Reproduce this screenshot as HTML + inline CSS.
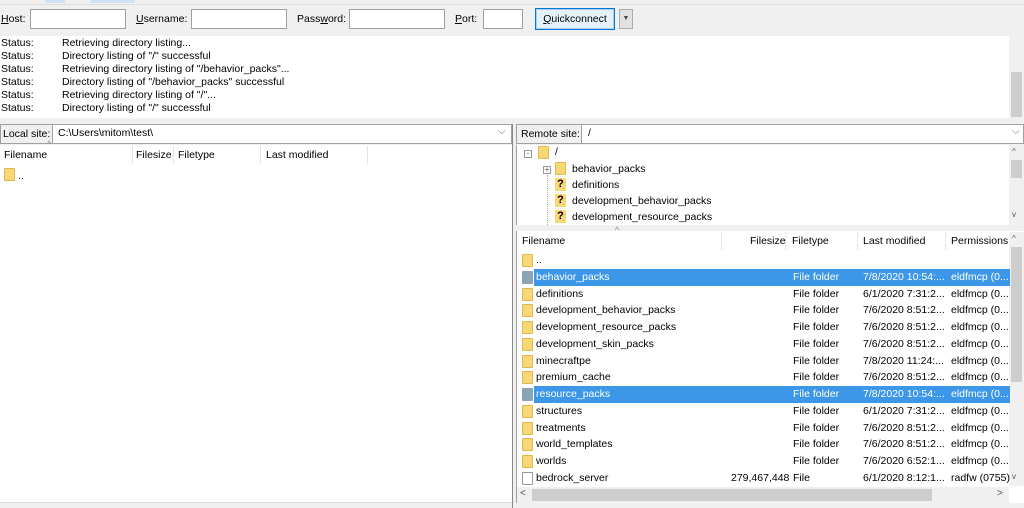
<!DOCTYPE html>
<html><head><meta charset="utf-8"><style>
*{margin:0;padding:0;box-sizing:border-box}
body{width:1024px;height:508px;overflow:hidden;background:#f0f0f0;font-family:"Liberation Sans",sans-serif;font-size:10.5px;color:#000;position:relative;white-space:nowrap}
.a{position:absolute}
.in{position:absolute;background:#fff;border:1px solid #a0a0a0;height:20px}
.lbl{position:absolute;top:13px}
.log div{height:13px;line-height:13px;white-space:nowrap}
.fold{position:absolute;width:11px;height:13px;background:#f8d876;border:1px solid #e0b850;border-radius:1px}
.row{position:absolute;left:518px;width:492px;height:16.75px;line-height:17.5px;white-space:nowrap;overflow:hidden}
.row span{position:absolute}
.sel{background:#3c97e8;color:#fff}
.q{position:absolute;width:11px;height:13px;background:#f8d876;font-weight:bold;font-size:11px;line-height:13px;text-align:center}
.hd{position:absolute;height:18px;line-height:19px;background:#fff;overflow:hidden}
.dv{position:absolute;top:0;width:1px;height:18px;background:#e5e5e5}
</style></head><body>
<div class="a" style="left:45px;top:0;width:20px;height:3px;background:#cfe3f5"></div>
<div class="a" style="left:90px;top:0;width:45px;height:3px;background:#cfe3f5"></div>
<div class="a" style="left:0;top:4px;width:1024px;height:1px;background:#ddd"></div>

<span class="lbl" style="left:1px"><u>H</u>ost:</span>
<div class="in" style="left:30px;top:9px;width:96px"></div>
<span class="lbl" style="left:136px"><u>U</u>sername:</span>
<div class="in" style="left:191px;top:9px;width:96px"></div>
<span class="lbl" style="left:297px">Pass<u>w</u>ord:</span>
<div class="in" style="left:349px;top:9px;width:96px"></div>
<span class="lbl" style="left:455px"><u>P</u>ort:</span>
<div class="in" style="left:483px;top:9px;width:40px"></div>
<div class="a" style="left:535px;top:8px;width:80px;height:22px;background:#e5f1fb;border:1px solid #0078d7;box-shadow:inset 0 0 0 1px #a8cdef;text-align:center;line-height:20px"><u>Q</u>uickconnect</div>
<div class="a" style="left:619px;top:9px;width:14px;height:20px;background:#e1e1e1;border:1px solid #adadad;font-size:7px;text-align:center;line-height:18px;color:#444">▼</div>

<div class="a log" style="left:0;top:36px;width:1024px;height:82px;background:#fff">
<div style="position:absolute;left:1px;top:1px;height:auto">Status:<br>Status:<br>Status:<br>Status:<br>Status:<br>Status:</div>
<div style="position:absolute;left:62px;top:1px;height:auto">Retrieving directory listing...<br>Directory listing of "/" successful<br>Retrieving directory listing of "/behavior_packs"...<br>Directory listing of "/behavior_packs" successful<br>Retrieving directory listing of "/"...<br>Directory listing of "/" successful</div>
<div style="position:absolute;left:1009px;top:0;width:15px;height:82px;background:#f0f0f0"></div>
<div style="position:absolute;left:1011px;top:36px;width:11px;height:45px;background:#cdcdcd"></div>
</div>

<!-- local site -->
<div class="a" style="left:0;top:124px;width:512px;height:20px;background:#fff;border:1px solid #a0a0a0"></div>
<div class="a" style="left:0;top:124px;width:53px;height:20px;background:#f0f0f0;border:1px solid #a0a0a0;line-height:18px;padding-left:2px">Local site:</div>
<span class="a" style="left:58px;top:127px">C:\Users\mitom\test\</span>
<span class="a" style="left:498px;top:126px;color:#666;font-size:10px">⌵</span>
<div class="a" style="left:0;top:145px;width:512px;height:358px;background:#fff"></div>
<div class="hd" style="left:0;top:146px;width:512px">
<span class="a" style="left:4px">Filename</span><span class="a" style="left:136px">Filesize</span><span class="a" style="left:178px">Filetype</span><span class="a" style="left:266px">Last modified</span>
<div class="dv" style="left:132px"></div><div class="dv" style="left:173px"></div><div class="dv" style="left:260px"></div><div class="dv" style="left:367px"></div>
</div>
<span class="a" style="left:47px;top:139px;color:#888;font-size:9px">^</span>
<div class="fold" style="left:4px;top:168px"></div><span class="a" style="left:18px;top:170px">..</span>
<div class="a" style="left:0;top:502px;width:512px;height:1px;background:#ddd"></div>

<!-- remote site -->
<div class="a" style="left:516px;top:124px;width:508px;height:20px;background:#fff;border:1px solid #a0a0a0"></div>
<div class="a" style="left:516px;top:124px;width:66px;height:20px;background:#f0f0f0;border:1px solid #a0a0a0;line-height:18px;padding-left:4px">Remote site:</div>
<span class="a" style="left:588px;top:127px">/</span>
<span class="a" style="left:1012px;top:126px;color:#666;font-size:10px">⌵</span>

<div class="a" style="left:516px;top:145px;width:508px;height:80px;background:#fff;border-left:1px solid #a0a0a0"></div>
<div class="a" style="left:1009px;top:145px;width:15px;height:80px;background:#f0f0f0"></div>
<div class="a" style="left:1011px;top:160px;width:11px;height:18px;background:#cdcdcd"></div>
<span class="a" style="left:1012px;top:147px;font-size:8px;color:#555">^</span>
<span class="a" style="left:1012px;top:210px;font-size:8px;color:#555">v</span>
<div class="a" style="left:524px;top:150px;width:8px;height:8px;border:1px solid #999;font-size:8px;line-height:6px;text-align:center;color:#555">-</div>
<div class="fold" style="left:538px;top:146px"></div><span class="a" style="left:555px;top:146px">/</span>
<div class="a" style="left:543px;top:166px;width:8px;height:8px;border:1px solid #999;font-size:8px;line-height:6px;text-align:center;color:#555">+</div>
<div class="fold" style="left:555px;top:162px"></div><span class="a" style="left:572px;top:163px">behavior_packs</span>
<div class="q" style="left:555px;top:178px">?</div><span class="a" style="left:572px;top:179px">definitions</span>
<div class="q" style="left:555px;top:194px">?</div><span class="a" style="left:572px;top:195px">development_behavior_packs</span>
<div class="q" style="left:555px;top:210px">?</div><span class="a" style="left:572px;top:211px">development_resource_packs</span>
<div class="a" style="left:547px;top:175px;width:1px;height:50px;border-left:1px dotted #aaa"></div>

<div class="a" style="left:516px;top:231px;width:508px;height:272px;background:#fff;border-left:1px solid #a0a0a0"></div>
<div class="hd" style="left:517px;top:232px;width:492px">
<span class="a" style="left:5px">Filename</span><span class="a" style="left:233px">Filesize</span><span class="a" style="left:275px">Filetype</span><span class="a" style="left:346px">Last modified</span><span class="a" style="left:434px">Permissions</span>
<div class="dv" style="left:204px"></div><div class="dv" style="left:268px"></div><div class="dv" style="left:340px"></div><div class="dv" style="left:428px"></div>
</div>
<span class="a" style="left:615px;top:225px;color:#888;font-size:9px">^</span>
<div class="a" style="left:1009px;top:232px;width:15px;height:254px;background:#f0f0f0"></div>
<div class="a" style="left:1011px;top:247px;width:11px;height:135px;background:#cdcdcd"></div>
<span class="a" style="left:1012px;top:234px;font-size:8px;color:#555">^</span>
<span class="a" style="left:1012px;top:472px;font-size:8px;color:#555">v</span>

<div class="row" style="top:252px"><div class="fold" style="left:4px;top:2px"></div><span style="left:18px">..</span></div>
<div class="row" style="top:268.75px"><div class="fold" style="left:4px;top:2px;background:#8aa5b5;border-color:#8aa5b5"></div><div class="sel" style="position:absolute;left:16px;right:0;top:0;bottom:0"></div><span style="left:18px;color:#fff">behavior_packs</span><span style="left:275px;color:#fff">File folder</span><span style="left:345px;color:#fff">7/8/2020 10:54:...</span><span style="left:433px;color:#fff">eldfmcp (0...</span></div>
<div class="row" style="top:285.5px"><div class="fold" style="left:4px;top:2px"></div><span style="left:18px">definitions</span><span style="left:275px">File folder</span><span style="left:345px">6/1/2020 7:31:2...</span><span style="left:433px">eldfmcp (0...</span></div>
<div class="row" style="top:302.25px"><div class="fold" style="left:4px;top:2px"></div><span style="left:18px">development_behavior_packs</span><span style="left:275px">File folder</span><span style="left:345px">7/6/2020 8:51:2...</span><span style="left:433px">eldfmcp (0...</span></div>
<div class="row" style="top:319px"><div class="fold" style="left:4px;top:2px"></div><span style="left:18px">development_resource_packs</span><span style="left:275px">File folder</span><span style="left:345px">7/6/2020 8:51:2...</span><span style="left:433px">eldfmcp (0...</span></div>
<div class="row" style="top:335.75px"><div class="fold" style="left:4px;top:2px"></div><span style="left:18px">development_skin_packs</span><span style="left:275px">File folder</span><span style="left:345px">7/6/2020 8:51:2...</span><span style="left:433px">eldfmcp (0...</span></div>
<div class="row" style="top:352.5px"><div class="fold" style="left:4px;top:2px"></div><span style="left:18px">minecraftpe</span><span style="left:275px">File folder</span><span style="left:345px">7/8/2020 11:24:...</span><span style="left:433px">eldfmcp (0...</span></div>
<div class="row" style="top:369.25px"><div class="fold" style="left:4px;top:2px"></div><span style="left:18px">premium_cache</span><span style="left:275px">File folder</span><span style="left:345px">7/6/2020 8:51:2...</span><span style="left:433px">eldfmcp (0...</span></div>
<div class="row" style="top:386px"><div class="fold" style="left:4px;top:2px;background:#8aa5b5;border-color:#8aa5b5"></div><div class="sel" style="position:absolute;left:16px;right:0;top:0;bottom:0"></div><span style="left:18px;color:#fff">resource_packs</span><span style="left:275px;color:#fff">File folder</span><span style="left:345px;color:#fff">7/8/2020 10:54:...</span><span style="left:433px;color:#fff">eldfmcp (0...</span></div>
<div class="row" style="top:402.75px"><div class="fold" style="left:4px;top:2px"></div><span style="left:18px">structures</span><span style="left:275px">File folder</span><span style="left:345px">6/1/2020 7:31:2...</span><span style="left:433px">eldfmcp (0...</span></div>
<div class="row" style="top:419.5px"><div class="fold" style="left:4px;top:2px"></div><span style="left:18px">treatments</span><span style="left:275px">File folder</span><span style="left:345px">7/6/2020 8:51:2...</span><span style="left:433px">eldfmcp (0...</span></div>
<div class="row" style="top:436.25px"><div class="fold" style="left:4px;top:2px"></div><span style="left:18px">world_templates</span><span style="left:275px">File folder</span><span style="left:345px">7/6/2020 8:51:2...</span><span style="left:433px">eldfmcp (0...</span></div>
<div class="row" style="top:453px"><div class="fold" style="left:4px;top:2px"></div><span style="left:18px">worlds</span><span style="left:275px">File folder</span><span style="left:345px">7/6/2020 6:52:1...</span><span style="left:433px">eldfmcp (0...</span></div>
<div class="row" style="top:469.75px"><div class="fold" style="left:4px;top:2px;background:#fff;border-color:#999"></div><span style="left:18px">bedrock_server</span><span style="left:213px">279,467,448</span><span style="left:275px">File</span><span style="left:345px">6/1/2020 8:12:1...</span><span style="left:433px">radfw (0755)</span></div>

<div class="a" style="left:517px;top:487px;width:492px;height:16px;background:#f0f0f0"></div>
<div class="a" style="left:532px;top:489px;width:400px;height:12px;background:#cdcdcd"></div>
<span class="a" style="left:520px;top:488px;font-size:10px;color:#555">&lt;</span>
<span class="a" style="left:997px;top:488px;font-size:10px;color:#555">&gt;</span>
<div class="a" style="left:512px;top:124px;width:1px;height:384px;background:#888"></div>
</body></html>
